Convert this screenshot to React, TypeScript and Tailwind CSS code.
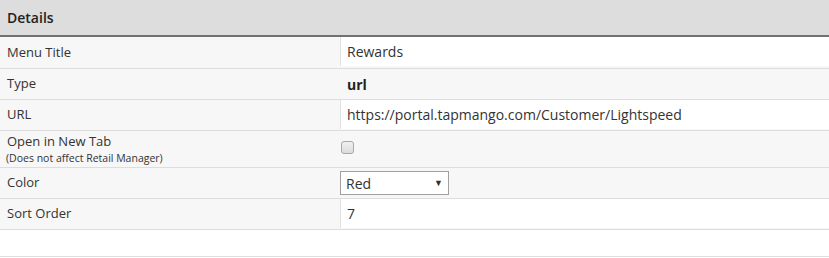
import React from "react";

const font = { fontFamily: '"Open Sans", "Liberation Sans", sans-serif' };

function Label({ children }: { children: React.ReactNode }) {
  return (
    <div className="w-[340px] shrink-0 pl-[7px] text-[13px] text-[#333333] flex items-center">
      {children}
    </div>
  );
}

export default function App() {
  return (
    <div className="w-[829px] h-[258px] bg-white text-[#333333]" style={font}>
      <div className="h-[37px] bg-[#dddddd] border-b-2 border-[#717171] flex items-center pl-[7px]">
        <span className="text-[14px] font-semibold text-[#222222]">Details</span>
      </div>

      <div className="h-[32px] flex bg-[#f7f7f7] border-b border-[#dddddd]">
        <Label>Menu Title</Label>
        <div className="flex-1 h-[29px] bg-white border-l border-[#e2e2e2] pl-[6px] flex items-center text-[14px]">
          Rewards
        </div>
      </div>

      <div className="h-[31px] flex bg-[#f7f7f7] border-b border-[#dddddd]">
        <Label>Type</Label>
        <div className="flex-1 pl-[7px] flex items-center text-[14px] font-bold text-[#222222]">url</div>
      </div>

      <div className="h-[31px] flex bg-[#f7f7f7] border-b border-[#dddddd]">
        <Label>URL</Label>
        <div className="flex-1 h-[29px] bg-white border-l border-[#e2e2e2] pl-[6px] flex items-center text-[14px]">
          https://portal.tapmango.com/Customer/Lightspeed
        </div>
      </div>

      <div className="h-[37px] flex bg-[#f7f7f7] border-b border-[#dddddd]">
        <div className="w-[340px] shrink-0 pl-[6px] flex flex-col pt-[1px]">
          <span className="text-[13px] leading-[18px] pl-[1px]">Open in New Tab</span>
          <span className="text-[10.5px] leading-[14px] mt-[1px]">(Does not affect Retail Manager)</span>
        </div>
        <div className="flex-1 pt-[10px] pl-[1px]">
          <div className="w-[13px] h-[13px] rounded-[3px] border border-[#a8a8a8] bg-gradient-to-b from-[#f0f0f0] to-[#dcdcdc]" />
        </div>
      </div>

      <div className="h-[31px] flex bg-[#f7f7f7] border-b border-[#dddddd]">
        <Label>Color</Label>
        <div className="flex-1 flex items-center">
          <div className="w-[109px] h-[24px] border border-[#a0a0a0] bg-white flex items-center justify-between pl-[5px] pr-[5px] text-[14px]">
            <span>Red</span>
            <span className="text-[9px] text-[#333333]">▼</span>
          </div>
        </div>
      </div>

      <div className="h-[31px] flex bg-[#f7f7f7] border-b border-[#dddddd]">
        <Label>Sort Order</Label>
        <div className="flex-1 h-[29px] bg-white border-l border-[#e2e2e2] pl-[6px] flex items-center text-[14px]">
          7
        </div>
      </div>

      <div className="h-[27px] border-b border-[#dddddd]" />
    </div>
  );
}
